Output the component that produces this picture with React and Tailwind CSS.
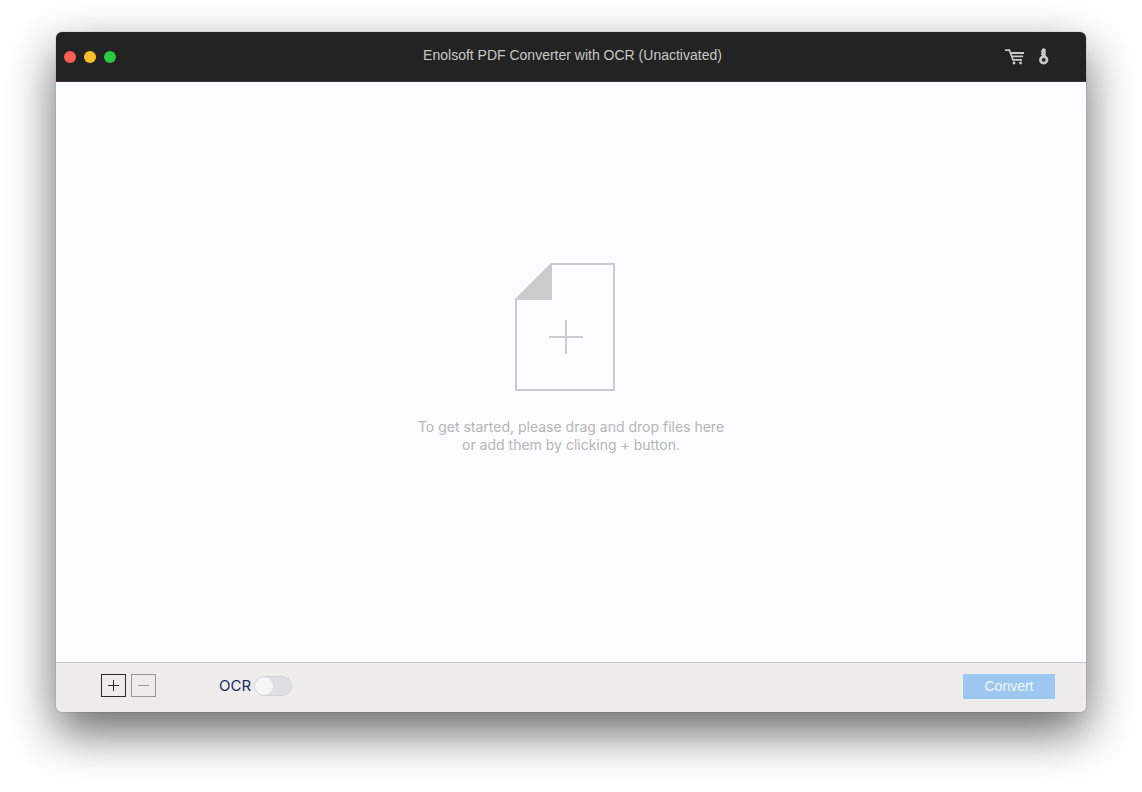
import { useState } from "react";

function CartIcon() {
  return (
    <svg width="20" height="16" viewBox="0 0 20 16" fill="none" stroke="#c9c9c9" aria-hidden="true">
      <path d="M0 1.1h4.4L8 10.9H17" strokeWidth="1.6" />
      <path d="M5.3 4H19" strokeWidth="1.8" />
      <path d="M6.5 7.4h11.6" strokeWidth="1.8" />
      <circle cx="9" cy="14" r="1.4" fill="#c9c9c9" stroke="none" />
      <circle cx="15.6" cy="14" r="1.4" fill="#c9c9c9" stroke="none" />
    </svg>
  );
}

function KeyIcon() {
  return (
    <svg width="10" height="17" viewBox="0 0 10 17" aria-hidden="true">
      <path
        fill="#c9c9c9"
        fillRule="evenodd"
        d="M2.9 1.2 4.7 0 6.7 1.2v6.5A4.6 4.6 0 1 1 2.7 7.7V6.9l-.8-.5v-.9l.8-.4V4.4l-.8-.5V3l.8-.4ZM4.7 9.9a1.9 1.9 0 1 0 0 3.8 1.9 1.9 0 0 0 0-3.8Z"
      />
    </svg>
  );
}

function DocumentIcon() {
  return (
    <svg width="100" height="128" viewBox="0 0 100 128" fill="none" aria-hidden="true">
      <path d="M1 37V127H99V1H37" stroke="#cbcbcb" strokeWidth="2" />
      <path d="M0 37V36L36 0h1v37Z" fill="#cbcbcb" />
      <path d="M34 74h34M51 57v34" stroke="#cbcbcb" strokeWidth="2" />
    </svg>
  );
}

function TitleBar() {
  return (
    <header className="grid h-[50px] shrink-0 grid-cols-[1fr_auto_1fr] items-center border-b border-[#3a3436] bg-[#232323]">
      <div className="flex gap-2 pl-2">
        <button type="button" aria-label="Close" className="size-3 rounded-full bg-[#ff5f57]" />
        <button type="button" aria-label="Minimize" className="size-3 rounded-full bg-[#ffbd2e]" />
        <button type="button" aria-label="Zoom" className="size-3 rounded-full bg-[#28ca41]" />
      </div>
      <h1 className="pb-1 pl-[3px] text-sm text-[#c8c8c8]">Enolsoft PDF Converter with OCR (Unactivated)</h1>
      <div className="flex items-center justify-end gap-3.5 pr-[37px]">
        <button type="button" aria-label="Buy">
          <CartIcon />
        </button>
        <button type="button" aria-label="Activate">
          <KeyIcon />
        </button>
      </div>
    </header>
  );
}

function DropArea() {
  return (
    <main className="flex flex-1 flex-col items-center justify-center gap-[27px] bg-[#fcfdff] pb-7">
      <div className="pr-3">
        <DocumentIcon />
      </div>
      <p className="text-center font-['Inter','Liberation_Sans',sans-serif] text-sm leading-[18px] text-[#b5b5b5]">
        To get started, please drag and drop files here
        <br />
        or add them by clicking + button.
      </p>
    </main>
  );
}

function Toolbar() {
  const [ocr, setOcr] = useState(false);
  return (
    <footer className="flex h-[50px] shrink-0 items-start border-t border-[#c3c6ca] bg-[#eeecea] pt-[11px] pr-[31px] pl-[45px]">
      <div className="flex gap-[5px]">
        <button
          type="button"
          aria-label="Add files"
          className="flex h-[23px] w-[25px] items-center justify-center border border-[#2a2a2a] text-[#2a2a2a]"
        >
          <svg width="11" height="11" viewBox="0 0 11 11" stroke="currentColor" aria-hidden="true">
            <path d="M0 5.5h11M5.5 0v11" />
          </svg>
        </button>
        <button
          type="button"
          aria-label="Remove files"
          disabled
          className="flex h-[23px] w-[25px] items-center justify-center border border-[#999795] text-[#999795]"
        >
          <svg width="11" height="11" viewBox="0 0 11 11" stroke="currentColor" aria-hidden="true">
            <path d="M0 5.5h11" />
          </svg>
        </button>
      </div>
      <label className="ml-[63px] flex h-6 items-center gap-[3px] font-['Inter','Liberation_Sans',sans-serif] text-[15px] text-[#1b2a6b]">
        OCR
        <input
          type="checkbox"
          role="switch"
          checked={ocr}
          onChange={(e) => setOcr(e.target.checked)}
          className="flex h-5 w-[38px] appearance-none items-center rounded-full border border-[#d0d3d8] bg-[#dddfe1] before:size-[18px] before:rounded-full before:bg-[#f5f7f7] checked:justify-end checked:bg-[#9bc7f1]"
        />
      </label>
      <button type="button" className="ml-auto h-[25px] w-[92px] bg-[#9bc7f1] pb-0.5 text-sm text-[#f4f7fa]">
        Convert
      </button>
    </footer>
  );
}

export default function App() {
  return (
    <div className="flex h-screen flex-col bg-white px-14 pt-8 pb-20 font-['Liberation_Sans',Arial,sans-serif]">
      <div className="flex flex-1 flex-col rounded-md shadow-[0_0_1px_rgba(0,0,0,0.6),0_20px_48px_rgba(0,0,0,0.6)]">
        <div className="flex flex-1 flex-col overflow-hidden rounded-md">
          <TitleBar />
          <DropArea />
          <Toolbar />
        </div>
      </div>
    </div>
  );
}
